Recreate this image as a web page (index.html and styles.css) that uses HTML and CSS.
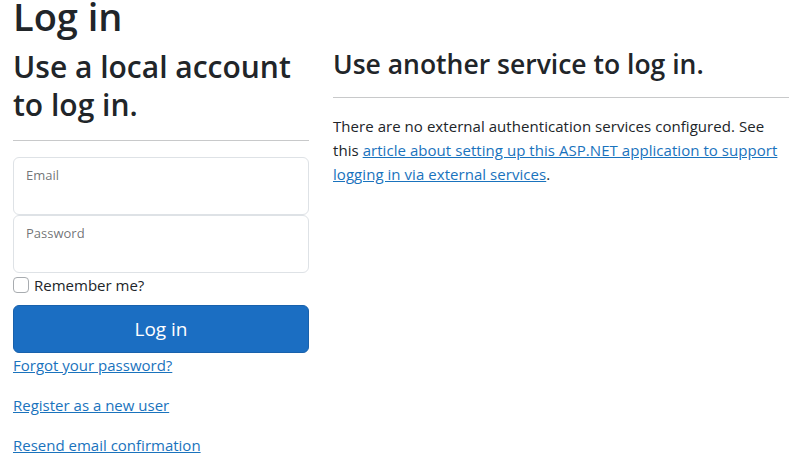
FILE: index.html
```html
<!DOCTYPE html>
<html lang="en">
<head>
<meta charset="utf-8">
<title>Log in</title>
<link rel="stylesheet" href="styles.css">
</head>
<body>
<main class="page">
  <h1 class="title">Log in</h1>
  <div class="row">
    <section class="col-left">
      <form class="login-form">
        <h2 class="sub">Use a local account to log in.</h2>
        <hr class="rule">
        <div class="floating">
          <input class="field" type="email" aria-label="Email">
          <label class="float-label">Email</label>
        </div>
        <div class="floating">
          <input class="field" type="password" aria-label="Password">
          <label class="float-label">Password</label>
        </div>
        <div class="check-row">
          <input class="check" type="checkbox" id="remember">
          <label for="remember" class="check-label">Remember me?</label>
        </div>
        <button type="button" class="btn-primary">Log in</button>
        <p class="link-line"><a href="#">Forgot your password?</a></p>
        <p class="link-line"><a href="#">Register as a new user</a></p>
        <p class="link-line"><a href="#">Resend email confirmation</a></p>
      </form>
    </section>
    <section class="col-right">
      <h3 class="sub-right">Use another service to log in.</h3>
      <hr class="rule rule-right">
      <p class="info">There are no external authentication services configured. See this <a href="#">article about setting up this ASP.NET application to support logging in via external services</a>.</p>
    </section>
  </div>
</main>
</body>
</html>
```

FILE: styles.css
```css
html, body {
  margin: 0;
  padding: 0;
  background: #fff;
}
body {
  font-family: "Open Sans", "Noto Sans", sans-serif;
  font-size: 15px;
  line-height: 24px;
  color: #212529;
}
.page {
  padding: 0 18px 0 13px;
}
.title {
  font-size: 38px;
  font-weight: 600;
  line-height: 32px;
  margin: 0;
}
.row {
  display: flex;
  gap: 24px;
  align-items: flex-start;
  margin-top: 16px;
}
.col-left {
  width: 296px;
  flex: none;
}
.col-right {
  width: 456px;
  flex: none;
}
.login-form {
  margin: 0;
}
.sub {
  font-size: 30px;
  font-weight: 600;
  line-height: 38px;
  margin: 0;
}
.sub-right {
  font-size: 26.5px;
  font-weight: 600;
  line-height: 32px;
  margin: 0;
}
.rule {
  border: 0;
  border-top: 1px solid #c8c9ca;
  margin: 16px 0;
  height: 0;
}
.rule-right {
  margin-top: 17px;
}
.floating {
  position: relative;
}
.field {
  display: block;
  box-sizing: border-box;
  width: 100%;
  height: 58px;
  margin: 0;
  border: 1px solid #dee2e6;
  border-radius: 6px;
  background: #fff;
  font: inherit;
  padding: 26px 12px 6px;
}
.float-label {
  position: absolute;
  left: 13px;
  top: 8px;
  font-size: 13px;
  line-height: 20px;
  color: rgba(33, 37, 41, 0.65);
  pointer-events: none;
}
.check-row {
  display: flex;
  align-items: center;
  height: 24px;
  margin: 0 0 8px;
}
.check {
  appearance: none;
  -webkit-appearance: none;
  width: 16px;
  height: 16px;
  margin: 0 5px 0 0;
  border: 1px solid #a8acb0;
  border-radius: 4px;
  background: #fff;
}
.check-label {
  line-height: 24px;
}
.btn-primary {
  display: block;
  width: 100%;
  height: 48px;
  border: 1px solid #1861ac;
  border-radius: 6px;
  background: #1b6ec2;
  color: #fff;
  font: inherit;
  font-size: 19px;
  line-height: 30px;
  padding: 8px 16px;
}
.link-line {
  margin: 0 0 16px;
}
a {
  color: #1a73bd;
  text-decoration: underline;
}
.info {
  margin: 0;
  letter-spacing: 0.05px;
}
```
